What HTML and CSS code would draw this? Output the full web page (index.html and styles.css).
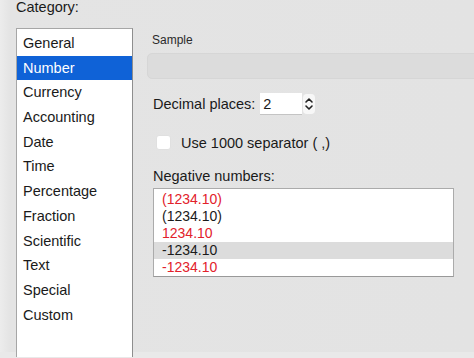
FILE: index.html
```html
<!DOCTYPE html>
<html lang="en">
<head>
<meta charset="UTF-8">
<title>Format Cells</title>
<link rel="stylesheet" href="styles.css">
</head>
<body>
<div class="dialog">
    <div class="category">
        <div class="category-label">Category:</div>
        <ul class="category-list">
            <li>General</li>
            <li class="selected">Number</li>
            <li>Currency</li>
            <li>Accounting</li>
            <li>Date</li>
            <li>Time</li>
            <li>Percentage</li>
            <li>Fraction</li>
            <li>Scientific</li>
            <li>Text</li>
            <li>Special</li>
            <li>Custom</li>
        </ul>
    </div>
    <div class="options">
        <div class="sample-label">Sample</div>
        <div class="sample-box"></div>
        <div class="decimal-row">
            <span>Decimal places:</span>
            <div class="decimal-input">2</div>
            <div class="spinner">
                <svg width="12" height="20" viewBox="0 0 12 20">
                    <path d="M3 8 L6 5 L9 8" fill="none" stroke="#222" stroke-width="1.6" stroke-linecap="round" stroke-linejoin="round"/>
                    <path d="M3 12 L6 15 L9 12" fill="none" stroke="#222" stroke-width="1.6" stroke-linecap="round" stroke-linejoin="round"/>
                </svg>
            </div>
        </div>
        <div class="check-row">
            <div class="checkbox"></div>
            <span>Use 1000 separator ( ,)</span>
        </div>
        <div class="negative-label">Negative numbers:</div>
        <ul class="negative-list">
            <li class="red">(1234.10)</li>
            <li>(1234.10)</li>
            <li class="red">1234.10</li>
            <li class="selected">-1234.10</li>
            <li class="red">-1234.10</li>
        </ul>
    </div>
</div>
</body>
</html>
```

FILE: styles.css
```css
body, html {
    margin: 0;
    padding: 0;
    height: 100vh;
    overflow: hidden;
    font-family: "Liberation Sans", Arial, sans-serif;
    color: #1a1a1a;
}
body {
    background: linear-gradient(to right, #ececec 0, #e4e4e4 10px, #e3e3e3 100%);
}
.dialog {
    display: flex;
    height: 100%;
    position: relative;
}
.dialog::after {
    content: "";
    position: absolute;
    left: 0;
    right: 0;
    bottom: 0;
    height: 6px;
    background: #e9e9e9;
}
.category {
    width: 133px;
    padding-left: 15px;
    box-sizing: border-box;
    flex-shrink: 0;
}
.category-label {
    font-size: 14.5px;
    line-height: 14px;
    padding-left: 1px;
}
.category-list {
    list-style: none;
    margin: 14px 0 0 1px;
    padding: 2px 0 0 0;
    height: 329px;
    box-sizing: border-box;
    background: white;
    border: 1px solid #a6a6a6;
    border-right: 1px solid #8e8e8e;
    border-bottom: none;
    position: relative;
    z-index: 1;
}
.category-list li {
    height: 24.7px;
    line-height: 24.7px;
    font-size: 14.5px;
    padding-left: 6px;
}
.category-list li.selected {
    background: #0f62d7;
    color: white;
}
.options {
    flex: 1;
    padding-left: 15px;
    display: flex;
    flex-direction: column;
    align-items: flex-start;
}
.sample-label {
    margin-top: 32px;
    margin-left: 4px;
    font-size: 12px;
    line-height: 16px;
    color: #2a2a2a;
}
.sample-box {
    margin-top: 5px;
    margin-left: -1px;
    width: 340px;
    height: 26px;
    box-sizing: border-box;
    background: #dcdcdc;
    border: 1px solid #d6d6d6;
    border-radius: 5px;
}
.decimal-row {
    margin-top: 14px;
    margin-left: 5px;
    display: flex;
    align-items: center;
    height: 22px;
    font-size: 14.5px;
}
.decimal-input {
    margin-left: 5px;
    width: 42px;
    height: 22px;
    box-sizing: border-box;
    background: white;
    border-bottom: 1px solid #c4c4c4;
    padding-left: 3px;
    line-height: 22px;
}
.spinner {
    margin-left: 1px;
    width: 12px;
    height: 20px;
    background: #f7f7f7;
    border-radius: 4px;
    display: flex;
}
.check-row {
    margin-top: 20px;
    margin-left: 8px;
    display: flex;
    align-items: center;
    height: 15px;
    font-size: 14.5px;
}
.checkbox {
    width: 15px;
    height: 15px;
    box-sizing: border-box;
    background: white;
    border-radius: 3px;
    border: 1px solid #e0e0e0;
    margin-right: 10px;
}
.negative-label {
    margin-top: 17px;
    margin-left: 5px;
    font-size: 14.5px;
    line-height: 18px;
}
.negative-list {
    list-style: none;
    margin: 3px 0 0 5px;
    padding: 2px 0 0 0;
    width: 301px;
    box-sizing: border-box;
    background: white;
    border: 1px solid #ababab;
    border-bottom-color: #999;
}
.negative-list li {
    height: 17px;
    line-height: 17px;
    font-size: 14px;
    padding-left: 8px;
}
.negative-list li.red {
    color: #e2212b;
}
.negative-list li.selected {
    background: #dcdcdc;
}
```
